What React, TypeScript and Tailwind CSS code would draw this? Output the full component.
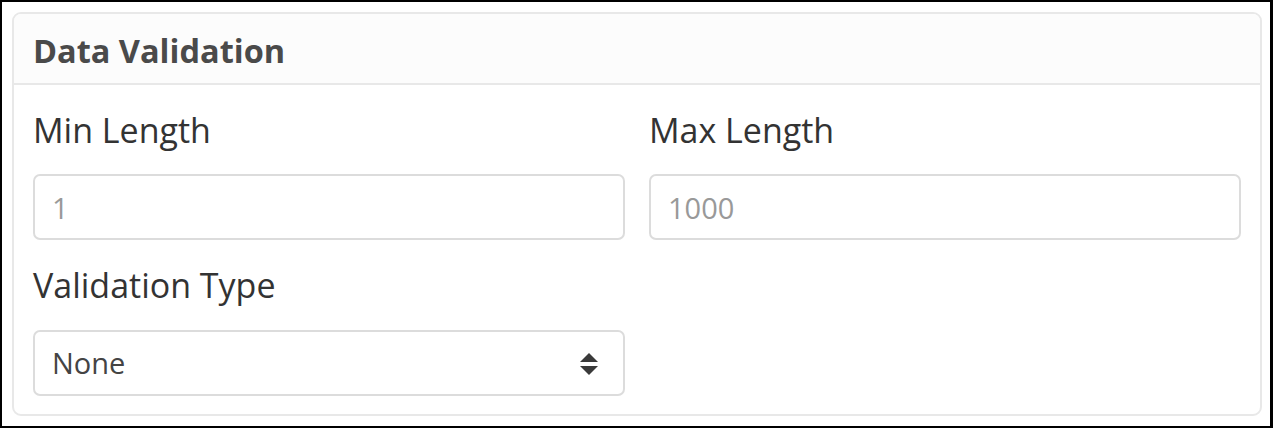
import React from "react";

export default function App() {
  return (
    <div
      className="w-[1273px] h-[428px] bg-white border-2 border-r-[3px] border-black pt-[10px] pl-[10px] pr-[8px] pb-[10px]"
      style={{ fontFamily: '"Open Sans", "Noto Sans", sans-serif' }}
    >
      <div className="w-[1250px] h-[404px] border-2 border-[#e8e8e8] rounded-[9px] overflow-hidden bg-white">
        <div className="h-[71px] bg-[#fcfcfc] border-b-2 border-[#e8e8e8] pl-[19px] pt-[18px]">
          <h2 className="text-[32.5px] leading-[38px] font-bold text-[#4a4a4a]">Data Validation</h2>
        </div>
        <div className="px-[19px] pt-[22px] pb-[18px] grid grid-cols-2 gap-x-[24px]">
          <div className="flex flex-col">
            <label className="text-[34px] leading-[46px] font-medium text-[#333] mb-[21px]">Min Length</label>
            <input
              className="h-[66px] w-full border-2 border-[#dcdcdc] rounded-[7px] px-[17px] text-[29px] text-[#495057] placeholder:text-[#999] outline-none"
              placeholder="1"
            />
          </div>
          <div className="flex flex-col">
            <label className="text-[34px] leading-[46px] font-medium text-[#333] mb-[21px]">Max Length</label>
            <input
              className="h-[66px] w-full border-2 border-[#dcdcdc] rounded-[7px] px-[17px] text-[29px] text-[#495057] placeholder:text-[#999] outline-none"
              placeholder="1000"
            />
          </div>
          <div className="flex flex-col mt-[22px]">
            <label className="text-[34px] leading-[46px] font-medium text-[#333] mb-[22px]">Validation Type</label>
            <div className="h-[66px] w-full border-2 border-[#dcdcdc] rounded-[7px] pl-[17px] pr-[25px] flex items-center justify-between">
              <span className="text-[29px] text-[#444]">None</span>
              <svg width="18" height="22" viewBox="0 0 18 22" className="mt-[1px]">
                <polygon points="9,0 18,9 0,9" fill="#3a3a3a" />
                <polygon points="0,13 18,13 9,22" fill="#3a3a3a" />
              </svg>
            </div>
          </div>
          <div />
        </div>
      </div>
    </div>
  );
}
